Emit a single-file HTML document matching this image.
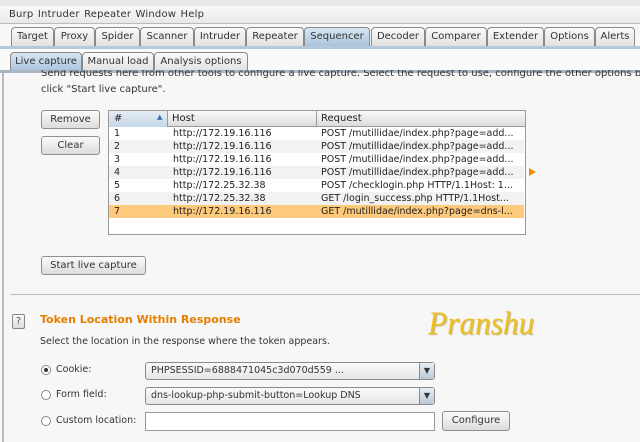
<!DOCTYPE html>
<html><head><style>
*{box-sizing:border-box;margin:0;padding:0}
body{width:640px;height:442px;overflow:hidden;background:#f7f7f7;font-family:"DejaVu Sans","Liberation Sans",sans-serif;font-size:10px;color:#222;position:relative}
.a{position:absolute}
.tab{position:absolute;top:27px;height:19px;border:1px solid #8a8a8a;border-bottom:none;border-radius:4px 4px 0 0;background:linear-gradient(#fafafa,#e2e2e2);font-size:10px;line-height:17px;text-align:center;color:#333}
.tab.sel{background:linear-gradient(#d8e6f2,#a9c4dc);}
.btn{position:absolute;border:1px solid #8f8f8f;border-radius:3px;background:linear-gradient(#fbfbfb,#dcdcdc);text-align:center;font-size:10px;color:#333}
.row{position:absolute;left:109px;width:415px;height:13px;font-size:9.5px;line-height:13px}
.row span{position:absolute}
.combo{position:absolute;left:145px;width:290px;height:18px;border:1px solid #8a8a8a;border-radius:3px;background:linear-gradient(#fafafa,#e6e6e6);font-size:9.5px;line-height:16px;padding-left:5px;color:#333}
.combo b{position:absolute;right:0;top:0;width:15px;height:16px;border-left:1px solid #8a8a8a;background:linear-gradient(#e8eef4,#b9c9d8);font-size:8px;text-align:center;line-height:16px}
.radio{position:absolute;left:41px;width:10px;height:10px;border:1px solid #888;border-radius:50%;background:#fff}
.lbl{position:absolute;left:56px;font-size:9.5px;color:#333}
</style></head><body>
<div class="a" style="left:0;top:0;width:640px;height:6px;background:#e9e9e9"></div>
<div class="a" style="left:0;top:6px;width:640px;height:18px;background:linear-gradient(#fafafa,#e8e8e8);border-bottom:1px solid #bbb"></div>
<div class="a" style="left:9px;top:9px;font-size:10px;color:#333;word-spacing:1px;letter-spacing:0.2px">Burp Intruder Repeater Window Help</div>
<div class="a" style="left:0;top:46px;width:640px;height:3px;background:#b5c9dc"></div>
<div class="tab" style="left:11px;width:43px">Target</div>
<div class="tab" style="left:54px;width:41px">Proxy</div>
<div class="tab" style="left:95px;width:45px">Spider</div>
<div class="tab" style="left:140px;width:54px">Scanner</div>
<div class="tab" style="left:194px;width:52px">Intruder</div>
<div class="tab" style="left:246px;width:58px">Repeater</div>
<div class="tab sel" style="left:304px;width:66px">Sequencer</div>
<div class="tab" style="left:371px;width:54px">Decoder</div>
<div class="tab" style="left:425px;width:62px">Comparer</div>
<div class="tab" style="left:487px;width:57px">Extender</div>
<div class="tab" style="left:544px;width:51px">Options</div>
<div class="tab" style="left:595px;width:40px">Alerts</div>
<div class="a" style="left:0;top:49px;width:640px;height:21px;background:#fafafa"></div>
<div class="tab sel" style="left:10px;top:52px;width:72px">Live capture</div>
<div class="tab" style="left:82px;top:52px;width:72px">Manual load</div>
<div class="tab" style="left:154px;top:52px;width:94px">Analysis options</div>
<div class="a" style="left:0;top:70px;width:640px;height:3px;background:#a8b6c4"></div>
<div class="a" style="left:2px;top:73px;width:2px;height:369px;background:#bbb"></div>
<div class="a" style="left:41px;top:70px;font-size:10px;color:#333;white-space:nowrap;height:9px;overflow:hidden;line-height:8px">Send requests here from other tools to configure a live capture. Select the request to use, configure the other options be</div>
<div class="a" style="left:41px;top:84px;font-size:10px;color:#333">click "Start live capture".</div>
<div class="btn" style="left:41px;top:110px;width:59px;height:19px;line-height:17px">Remove</div>
<div class="btn" style="left:41px;top:136px;width:59px;height:19px;line-height:17px">Clear</div>
<div class="a" style="left:108px;top:110px;width:418px;height:125px;border:1px solid #999;background:#fff"></div>
<div class="a" style="left:109px;top:111px;width:416px;height:16px;background:linear-gradient(#fafafa,#dcdcdc);border-bottom:1px solid #999"></div>
<div class="a" style="left:109px;top:111px;width:59px;height:16px;background:linear-gradient(#e6eef6,#c4d6e6);border-right:1px solid #999"></div>
<div class="a" style="left:168px;top:111px;width:149px;height:16px;border-right:1px solid #999"></div>
<div class="a" style="left:114px;top:113px;font-size:10px">#</div>
<div class="a" style="left:157px;top:113px;font-size:7px;color:#3c6ea8">▲</div>
<div class="a" style="left:172px;top:113px;font-size:10px">Host</div>
<div class="a" style="left:321px;top:113px;font-size:10px">Request</div>
<div class="row" style="top:127px;background:#fff"><span style="left:5px">1</span><span style="left:64px">http://172.19.16.116</span><span style="left:212px">POST /mutillidae/index.php?page=add...</span></div>
<div class="row" style="top:140px;background:#f2f2f2"><span style="left:5px">2</span><span style="left:64px">http://172.19.16.116</span><span style="left:212px">POST /mutillidae/index.php?page=add...</span></div>
<div class="row" style="top:153px;background:#fff"><span style="left:5px">3</span><span style="left:64px">http://172.19.16.116</span><span style="left:212px">POST /mutillidae/index.php?page=add...</span></div>
<div class="row" style="top:166px;background:#f2f2f2"><span style="left:5px">4</span><span style="left:64px">http://172.19.16.116</span><span style="left:212px">POST /mutillidae/index.php?page=add...</span></div>
<div class="row" style="top:179px;background:#fff"><span style="left:5px">5</span><span style="left:64px">http://172.25.32.38</span><span style="left:212px">POST /checklogin.php HTTP/1.1Host: 1...</span></div>
<div class="row" style="top:192px;background:#f2f2f2"><span style="left:5px">6</span><span style="left:64px">http://172.25.32.38</span><span style="left:212px">GET /login_success.php HTTP/1.1Host...</span></div>
<div class="row" style="top:205px;background:#fdc97a"><span style="left:5px">7</span><span style="left:64px">http://172.19.16.116</span><span style="left:212px">GET /mutillidae/index.php?page=dns-l...</span></div>
<div class="a" style="left:529px;top:168px;width:0;height:0;border-left:7px solid #f08a00;border-top:4px solid transparent;border-bottom:4px solid transparent"></div>
<div class="btn" style="left:41px;top:256px;width:105px;height:19px;line-height:17px">Start live capture</div>
<div class="a" style="left:10px;top:294px;width:630px;height:1px;background:#bbb"></div>
<div class="a" style="left:12px;top:314px;width:13px;height:15px;border:1px solid #888;border-radius:2px;background:linear-gradient(#fafafa,#ddd);font-size:10px;text-align:center;line-height:13px;color:#555">?</div>
<div class="a" style="left:40px;top:313px;font-size:11px;font-weight:bold;color:#e67e00">Token Location Within Response</div>
<div class="a" style="left:40px;top:336px;font-size:9.5px;color:#333">Select the location in the response where the token appears.</div>
<div class="a" style="left:428px;top:306px;font-family:'Liberation Serif',serif;font-style:italic;font-size:33px;color:#f0c020;text-shadow:1px 1px 1px rgba(140,110,20,0.5);transform:scaleX(0.95);transform-origin:left">Pranshu</div>
<div class="radio" style="top:365px"></div><div class="a" style="left:44px;top:368px;width:4px;height:4px;border-radius:50%;background:#333"></div>
<div class="lbl" style="top:364px">Cookie:</div>
<div class="combo" style="top:362px">PHPSESSID=6888471045c3d070d559 ...<b>▼</b></div>
<div class="radio" style="top:390px"></div>
<div class="lbl" style="top:389px">Form field:</div>
<div class="combo" style="top:387px">dns-lookup-php-submit-button=Lookup DNS<b>▼</b></div>
<div class="radio" style="top:416px"></div>
<div class="lbl" style="top:415px">Custom location:</div>
<div class="a" style="left:145px;top:412px;width:290px;height:19px;border:1px solid #999;background:#fff"></div>
<div class="btn" style="left:442px;top:411px;width:68px;height:20px;line-height:18px">Configure</div>
</body></html>
